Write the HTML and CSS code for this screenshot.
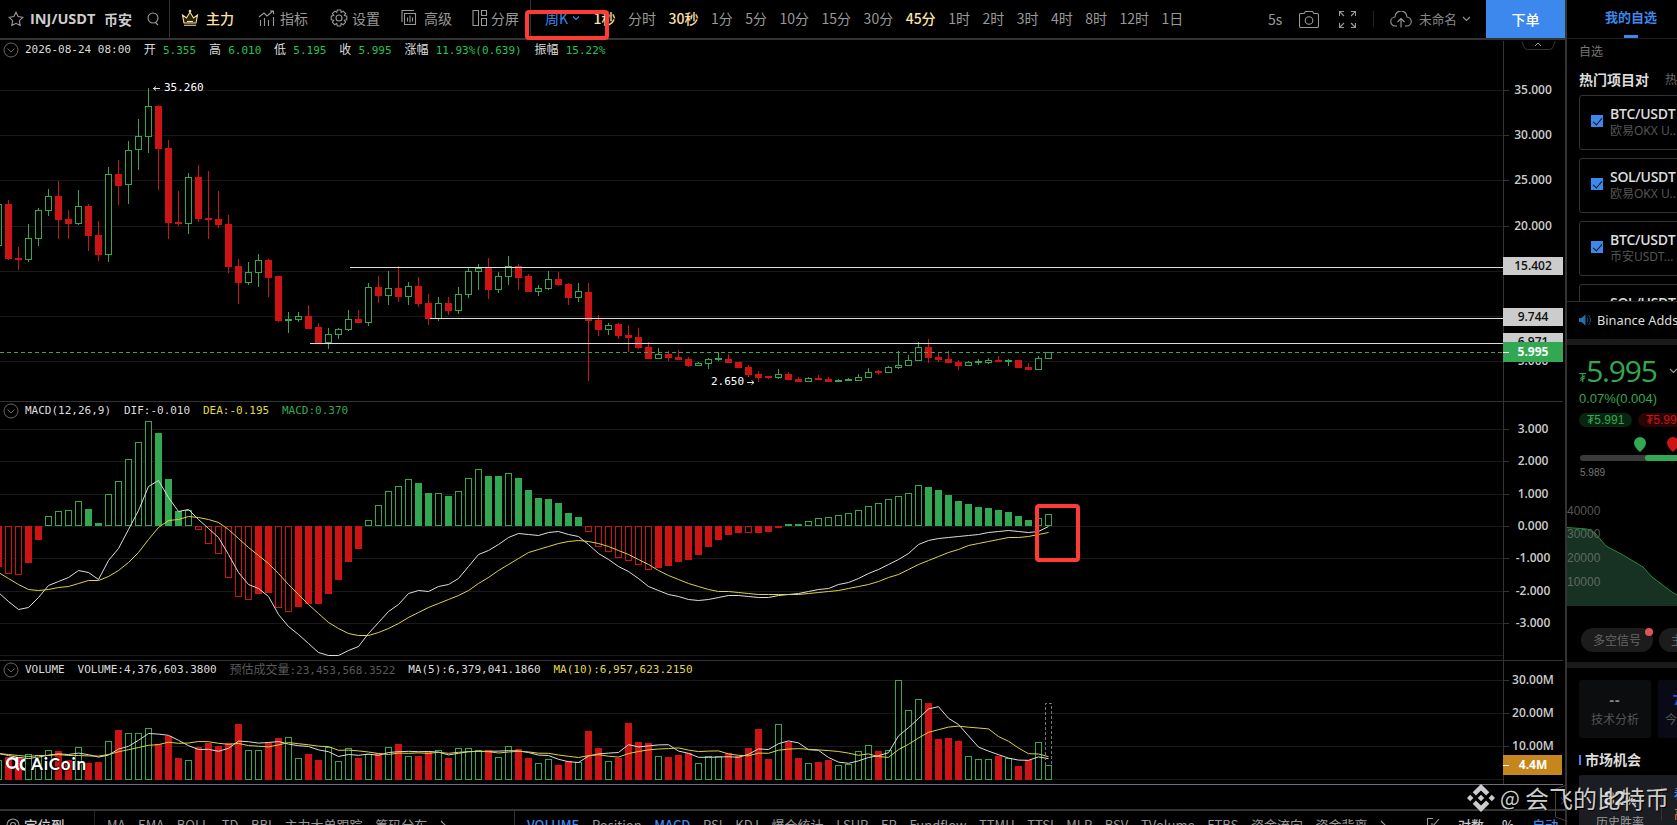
FILE: index.html
```html
<!DOCTYPE html>
<html lang="zh-CN">
<head>
  <meta charset="UTF-8" />
  <meta name="viewport" content="width=device-width, initial-scale=1.0"/>
  <title>INJ/USDT 币安 - AiCoin</title>
  <link rel="stylesheet" href="styles.css">
</head>
<body>
  <div class="app">
    <div class="workspace">
      <header class="topbar">
        <div class="pair">
          <svg class="icon star" width="16" height="16" viewBox="0 0 16 16"><path d="M8 1.2l2.1 4.4 4.7.7-3.4 3.4.8 4.9L8 12.3l-4.2 2.3.8-4.9L1.2 6.3l4.7-.7z"/></svg>
          <span class="pair-name">INJ/USDT</span>
          <span class="pair-market">币安</span>
          <svg class="icon search" width="13" height="14" viewBox="0 0 13 14"><circle cx="6" cy="6" r="5"/><path d="M8.5 10.5l2.5 2.5"/></svg>
        </div>
        <nav class="tools">
          <span class="tool gold"><svg class="icon" width="18" height="18" viewBox="0 0 18 18"><path d="M3 14L1.5 6l4 3L9 3l3.500 6 4-3L15 14zM3 16.200h12"/><path d="M6 12.500h6"/><circle cx="9" cy="2" r=".8"/></svg>主力</span>
          <span class="tool t-ind"><svg class="icon" width="18" height="18" viewBox="0 0 18 18"><path d="M1 8l5-4 3 3 6-5M12 2h3.500v3M2.500 11v6M6.500 9v8M10.500 11v6M15.500 8v9"/></svg>指标</span>
          <span class="tool t-set"><svg class="icon" width="18" height="18" viewBox="0 0 18 18"><path d="M7.300 1h3.400l.5 2.300 2-1.200 2.400 2.400-1.300 2 2.500.6v3.600l-2.500.6 1.300 2-2.400 2.400-2-1.300-.5 2.600H7.300l-.5-2.600-2 1.300-2.400-2.400 1.300-2-2.500-.6V7.100l2.500-.6-1.300-2 2.400-2.400 2 1.200z"/><circle cx="9" cy="9" r="3"/></svg>设置</span>
          <span class="tool t-adv"><svg class="icon" width="16" height="18" viewBox="0 0 16 18"><path d="M1 13V1.500h12M3.500 4.500h11v11h-11zM6.500 8.500v4M9 6.500v7M11.500 8.500v4"/></svg>高级</span>
          <span class="tool t-split"><svg class="icon" width="16" height="18" viewBox="0 0 16 18"><path d="M1 1.500h5.500v15H1zM9.500 1.500h5v5h-5zM9.500 9.500h5v7h-5z"/></svg>分屏</span>
        </nav>
        <nav class="periods">
          <span class="active">周K<svg class="icon caret" width="8" height="6" viewBox="0 0 8 6"><path d="M1 1.500l3 3 3-3"/></svg></span>
          <span class="gold">1秒</span><span>分时</span><span class="gold">30秒</span><span>1分</span><span>5分</span><span>10分</span><span>15分</span><span>30分</span><span class="gold">45分</span><span>1时</span><span>2时</span><span>3时</span><span>4时</span><span>8时</span><span>12时</span><span>1日</span>
        </nav>
        <div class="actions">
          <span class="refresh">5s</span>
          <svg class="icon camera" width="20" height="17" viewBox="0 0 20 17"><path d="M2 2.500h3l1.500-2h7l1.500 2h3q1.500 0 1.500 1.500v11q0 1.500-1.500 1.500H2Q.5 16.500.5 15V4Q.5 2.500 2 2.500z"/><circle cx="10" cy="9.500" r="3.800"/></svg>
          <svg class="icon expand" width="17" height="17" viewBox="0 0 17 17"><path d="M.5 5V.5H5M12 .5h4.500V5M16.500 12v4.500H12M5 16.500H.5V12M1 1l4 4M16 1l-4 4M16 16l-4-4M1 16l4-4"/></svg>
          <i class="sep"></i>
          <svg class="icon cloud" width="22" height="17" viewBox="0 0 22 17"><path d="M7 15H5.500A4.500 4.500 0 0 1 5 6a6 6 0 0 1 12 0 4.500 4.500 0 0 1-.5 9H15M11 16.500V8M7.500 11L11 7.500l3.500 3.500"/></svg>
          <span class="layout">未命名</span>
          <svg class="icon" width="9" height="6" viewBox="0 0 9 6"><path d="M1 1l3.500 3.500L8 1"/></svg>
        </div>
        <button class="order">下单</button>
      </header>

      <section class="chart">
        <svg id="plot" width="1565" height="768" viewBox="0 41 1565 768"></svg>
        <div class="legend legend-price">
          <svg class="fold" width="16" height="16" viewBox="0 0 16 16"><circle cx="8" cy="8" r="7"/><path d="M4.500 6.500L8 10l3.500-3.500"/></svg>
          <span class="date">2026-08-24 08:00</span>
          <span>开 <b>5.355</b></span><span>高 <b>6.010</b></span><span>低 <b>5.195</b></span><span>收 <b>5.995</b></span><span>涨幅 <b>11.93%(0.639)</b></span><span>振幅 <b>15.22%</b></span>
        </div>
        <div class="legend legend-macd">
          <svg class="fold" width="16" height="16" viewBox="0 0 16 16"><circle cx="8" cy="8" r="7"/><path d="M4.500 6.500L8 10l3.500-3.500"/></svg>
          <span>MACD(12,26,9)</span><span>DIF:-0.010</span><span class="yellow">DEA:-0.195</span><span class="green">MACD:0.370</span>
        </div>
        <div class="legend legend-vol">
          <svg class="fold" width="16" height="16" viewBox="0 0 16 16"><circle cx="8" cy="8" r="7"/><path d="M4.500 6.500L8 10l3.500-3.500"/></svg>
          <span>VOLUME</span><span>VOLUME:4,376,603.3800</span><span class="dim"><i>预估成交量</i>:23,453,568.3522</span><span>MA(5):6,379,041.1860</span><span class="yellow">MA(10):6,957,623.2150</span>
        </div>
        <div class="brand">
          <svg width="21" height="18" viewBox="0 0 21 18"><circle cx="7" cy="8" r="4.800"/><path d="M12 2v10q0 2 2 3M20 5q-4 0-4 4.500t4 5"/></svg>AiCoin
        </div>
      </section>

      <footer class="bottombar">
        <svg class="icon locate" width="14" height="14" viewBox="0 0 14 14"><circle cx="7" cy="7" r="6"/><circle cx="7" cy="7" r="2.500"/></svg>
        <b class="goto">定位到</b>
        <div class="mains"><span>MA</span><span>EMA</span><span>BOLL</span><span>TD</span><span>BBI</span><span>主力大单跟踪</span><span>筹码分布</span><svg class="icon" width="6" height="10" viewBox="0 0 6 10"><path d="M1 1l4 4-4 4"/></svg></div>
        <div class="subs"><span class="on">VOLUME</span><span>Position</span><span class="on">MACD</span><span>RSI</span><span>KDJ</span><span>爆仓统计</span><span>LSUR</span><span>ER</span><span>Fundflow</span><span>TTMU</span><span>TTSI</span><span>MLR</span><span>BSV</span><span>TVolume</span><span>FTBS</span><span>资金流向</span><span>资金背离</span><svg class="icon" width="6" height="10" viewBox="0 0 6 10"><path d="M1 1l4 4-4 4"/></svg></div>
        <div class="scale"><svg class="icon" width="13" height="13" viewBox="0 0 13 13"><path d="M6 .5H.5v12M12 1L5 9M5 5v4h4"/></svg><b>对数</b><b>%</b><b class="on">自动</b></div>
      </footer>
    </div>

    <aside class="side">
      <div class="tabs"><span>我的自选</span></div>
      <div class="sub-tab">自选</div>
      <div class="groups"><b>热门项目对</b><span>热门</span></div>
      <div class="watch">
        <div class="coin"><i class="check"></i><div><b>BTC/USDT</b><small>欧易OKX U...</small></div></div>
        <div class="coin"><i class="check"></i><div><b>SOL/USDT</b><small>欧易OKX U...</small></div></div>
        <div class="coin"><i class="check"></i><div><b>BTC/USDT</b><small>币安USDT...</small></div></div>
        <div class="coin"><i class="check"></i><div><b>SOL/USDT</b><small>币安USDT...</small></div></div>
      </div>
      <div class="news">
        <svg width="13" height="12" viewBox="0 0 13 12"><path class="horn" d="M0 4h2.500L6.500.5v11L2.500 8H0z"/><path class="wave" d="M8 3.500q2 2.500 0 5M9.500 1q4 5 0 10"/></svg>
        <span>Binance Adds</span>
      </div>
      <div class="band"></div>
      <div class="quote">
        <div class="last"><small>₮</small>5.995<svg class="icon" width="9" height="6" viewBox="0 0 9 6"><path d="M1 1l3.500 3.500L8 1"/></svg></div>
        <div class="change">0.07%(0.004)</div>
        <div class="book"><span class="bid">₮5.991</span><span class="ask">₮5.999</span></div>
        <svg class="range" width="98" height="24" viewBox="0 0 98 24">
          <path fill="#32a852" d="M61 15q-6-5-6-9a6 6 0 0 1 12 0q0 4-6 9z"/>
          <path fill="#cc1414" d="M94 15q-6-5-6-9a6 6 0 0 1 12 0q0 4-6 9z"/>
          <rect x="1" y="18" width="97" height="6" rx="3" fill="#3a3a3a"/>
          <rect x="66" y="18" width="40" height="6" rx="3" fill="#32a852"/>
        </svg>
        <div class="low">5.989</div>
      </div>
      <svg class="depth" width="110" height="112" viewBox="0 0 110 112">
        <path fill="#173222" d="M0 33.500L20 35l8 4 11 13 17 9 20 12 9 10 20 15 5 3v11H0z"/>
        <path fill="none" stroke="#218a3c" d="M0 33.500L20 35l8 4 11 13 17 9 20 12 9 10 20 15 5 3"/>
        <text x="0" y="21">40000</text><text x="0" y="44">30000</text><text x="0" y="68">20000</text><text x="0" y="92">10000</text>
      </svg>
      <div class="signals"><span class="signal dot">多空信号</span><span class="signal">主力</span></div>
      <div class="band"></div>
      <div class="stats">
        <div class="stat"><b>--</b><span>技术分析</span></div>
        <div class="stat blue"><b>7</b><span>今日</span></div>
      </div>
      <h3 class="chance">市场机会</h3>
      <div class="win"><div><b>82<small>%</small></b><span>历史胜率</span></div><div class="more"><b>看</b><em>高</em></div></div>
    </aside>
  </div>

  <svg class="edge-tab" width="11" height="36" viewBox="0 0 11 36"><path d="M10.500.5L.5 4v28l10 3.500M6 12.500l3 3.500-3 3.500"/></svg>
  <div class="mark mark-period"></div>
  <div class="mark mark-cross"></div>
  <div class="watermark">
    <svg width="28" height="28" viewBox="0 0 28 28"><path d="M14 0l8.300 8.300-3.200 3.200L14 6.400l-5.100 5.100-3.200-3.200zM3.200 10.800L6.400 14l-3.200 3.200L0 14zM24.800 10.800L28 14l-3.200 3.200-3.200-3.200zM14 10.800l3.200 3.200-3.200 3.200-3.200-3.200zM8.900 16.500L14 21.600l5.100-5.100 3.200 3.200L14 28l-8.300-8.300z"/></svg>
    <span class="at">@</span>
    <span>会飞的比特币</span>
  </div>

  <script src="chart.js"></script>
</body>
</html>
```
FILE: styles.css
```css
* {
  box-sizing: border-box;
}
body {
  margin: 0;
  background: #000;
  color: #999;
  font-family: "Noto Sans", "Noto Sans CJK SC", sans-serif;
  font-size: 14px;
  width: 1677px;
  height: 825px;
  overflow: hidden;
  position: relative;
}
.app {
  display: flex;
  height: 825px;
  overflow: hidden;
}
.workspace {
  width: 1567px;
  flex: none;
  border-right: 2px solid #333;
  display: flex;
  flex-direction: column;
}
.icon {
  fill: none;
  stroke: #999;
  stroke-width: 1.1;
  flex: none;
}
.gold {
  color: #fbe0a5;
}
.gold .icon {
  stroke: #fbe0a5;
  fill: #2b2408;
}
.green {
  color: #32a852;
}
.yellow {
  color: #e0d848;
}
.legend .dim {
  color: #5a5a5a;
}

/* top bar */
.topbar {
  height: 40px;
  flex: none;
  border-bottom: 2px solid #333;
  display: flex;
  white-space: nowrap;
  font-family: "Noto Sans CJK SC", sans-serif;
}
.pair {
  width: 170px;
  flex: none;
  border-right: 1px solid #333;
  display: flex;
  align-items: center;
  padding-left: 8px;
  padding-bottom: 1px;
  color: #ccc;
  font-weight: bold;
}
.pair-name {
  margin-left: 6px;
  width: 74px;
  font-family: "Open Sans", sans-serif;
  font-size: 14.5px;
}
.pair-market {
  width: 43px;
}
.tools {
  width: 361px;
  flex: none;
  display: flex;
  align-items: center;
  padding-left: 11px;
  padding-bottom: 2px;
  border-right: 1px solid #333;
}
.tool {
  display: flex;
  align-items: center;
  width: 77px;
  flex: none;
}
.tool .icon {
  margin-right: 7px;
}
.tool.gold {
  font-weight: 500;
}
.tool.t-ind {
  width: 72px;
}
.t-ind .icon, .t-set .icon {
  margin-right: 4px;
}
.tool.t-set {
  width: 71px;
}
.tool.t-adv {
  width: 71px;
}
.tool.t-split {
  width: 50px;
}
.t-split .icon {
  margin-right: 3px;
}
.periods {
  display: flex;
  align-items: center;
  padding-left: 14px;
  padding-bottom: 2px;
  width: 737px;
  flex: none;
  gap: 12.5px;
}
.periods .gold {
  font-weight: 500;
}
.periods .active {
  color: #3d88ed;
  display: flex;
  align-items: center;
  width: 36px;
}
.caret {
  stroke: #3d88ed;
  margin-left: 4px;
}
.actions {
  display: flex;
  align-items: center;
  width: 218px;
  flex: none;
}
.refresh {
  width: 31px;
}
.expand {
  margin-left: 20px;
}
.sep {
  width: 1px;
  height: 16px;
  background: #222;
  margin: 0 16px 0 17px;
}
.layout {
  font-size: 12.7px;
  margin: 0 5px 2px 7px;
  color: #888;
}
.order {
  width: 80px;
  height: 38px;
  border: none;
  padding: 0;
  background: #3d88ed;
  color: #fff;
  font: 500 14px "Noto Sans CJK SC", sans-serif;
}

/* chart panes */
.chart {
  height: 769px;
  flex: none;
  position: relative;
}
#plot {
  display: block;
  margin-top: 1px;
}
.legend {
  position: absolute;
  left: 3px;
  display: flex;
  align-items: center;
  height: 16px;
  gap: 12.8px;
  font: 11px/16px "DejaVu Sans Mono", "Noto Sans CJK SC", monospace;
  color: #ddd;
  white-space: pre;
}
.legend-price {
  top: 2px;
}
.legend-macd {
  top: 363px;
}
.legend-vol {
  top: 622px;
}
.legend b {
  font-weight: normal;
  font-size: 11px;
  color: #20c458;
}
.legend i {
  font-style: normal;
  font-size: 12px;
}
.legend-price span:not(.date) {
  font-size: 12px;
}
.fold {
  fill: none;
  stroke: #666;
  margin-right: -6.8px;
}
.brand {
  position: absolute;
  left: 5px;
  top: 713px;
  display: flex;
  align-items: center;
  gap: 5px;
  color: #fff;
  font: bold 17px/22px Lato, sans-serif;
  letter-spacing: 0.9px;
  text-shadow: 0 0 2px #000, 0 0 2px #000;
}
.brand svg {
  fill: none;
  stroke: #fff;
  stroke-width: 2.6;
}
#plot text {
  font: 600 12px "Open Sans", sans-serif;
  fill: #ccc;
  text-anchor: middle;
}
#plot .note {
  font: 11px "DejaVu Sans Mono", monospace;
  fill: #fff;
  text-anchor: start;
}
#plot .on-light {
  fill: #111;
}
#plot .on-color {
  fill: #fff;
  font-weight: bold;
}

/* bottom bar */
.bottombar {
  height: 30px;
  flex: none;
  border-top: 2px solid #333;
  display: flex;
  align-items: center;
  white-space: nowrap;
  font-size: 13px;
  line-height: 20px;
  padding-bottom: 1px;
  font-family: "Noto Sans CJK SC", sans-serif;
}
.bottombar b {
  color: #ccc;
  font-weight: 500;
}
.bottombar .on {
  color: #3d88ed;
  font-weight: 500;
}
.locate {
  margin-left: 6px;
}
.goto {
  margin-left: 4px;
  width: 70px;
  font-size: 13.5px;
}
.mains {
  display: flex;
  align-items: center;
  gap: 12.6px;
  width: 421px;
  height: 28px;
  padding-left: 12px;
  border-left: 1px solid #222;
  border-right: 1px solid #333;
}
.subs {
  display: flex;
  align-items: center;
  gap: 12.6px;
  width: 912px;
  padding-left: 12px;
}
.scale {
  display: flex;
  align-items: center;
  gap: 18px;
}

/* right panel */
.side {
  width: 110px;
  flex: none;
  overflow: hidden;
  white-space: nowrap;
}
.tabs {
  height: 39px;
  border-bottom: 1px solid #1c1c1c;
  padding-left: 38px;
}
.tabs span {
  display: block;
  width: 52px;
  height: 38px;
  line-height: 34px;
  font-weight: bold;
  font-size: 13px;
  color: #3d88ed;
  background: linear-gradient(#3d88ed, #3d88ed) 19px 35px / 14px 3px no-repeat;
}
.sub-tab {
  margin: 4px 0 0 12px;
  font-size: 12px;
  line-height: 18px;
  color: #777;
}
.groups {
  margin-left: 12px;
  padding-top: 8px;
  height: 34px;
  line-height: 22px;
  display: flex;
  gap: 16px;
}
.groups b {
  color: #ddd;
}
.groups span {
  font-size: 12px;
  color: #666;
}
.watch {
  height: 206px;
  overflow: hidden;
  padding-left: 12px;
}
.coin {
  width: 160px;
  height: 55px;
  margin-bottom: 8px;
  border: 1px solid #333;
  border-radius: 3px;
  display: flex;
  padding: 8px 0 0 10px;
}
.coin b {
  display: block;
  font: 600 14px/20px "Open Sans", sans-serif;
  letter-spacing: -0.3px;
  color: #ddd;
}
.coin small {
  display: block;
  font-size: 12px;
  line-height: 14px;
  color: #555;
}
.check {
  width: 12px;
  height: 12px;
  background: #3d88ed;
  margin: 11px 7px 0 1px;
  flex: none;
}
.check::after {
  content: "";
  display: block;
  width: 4px;
  height: 8px;
  margin: 1px 0 0 4px;
  border: solid #06152b;
  border-width: 0 1.5px 1.5px 0;
  transform: rotate(40deg);
}
.news {
  height: 38px;
  border-top: 1px solid #2a2a2a;
  padding-left: 12px;
  padding-bottom: 1px;
  display: flex;
  align-items: center;
  gap: 5px;
  font-size: 12.8px;
  color: #ddd;
}
.news svg {
  flex: none;
}
.horn {
  fill: #2271ad;
}
.wave {
  fill: none;
  stroke: #1b4d7a;
}
.band {
  height: 6px;
  background: #1a1a1c;
}
.quote {
  height: 149px;
  padding-left: 12px;
  color: #32a852;
}
.last {
  padding-top: 8px;
  height: 43px;
  font: 30px/36px "Open Sans", sans-serif;
  letter-spacing: -1.2px;
}
.last small {
  font-size: 12px;
  margin-right: 1px;
}
.last .icon {
  vertical-align: 8px;
  margin-left: 12px;
}
.change {
  font: 13px/22px "Liberation Sans", sans-serif;
}
.book {
  display: flex;
  gap: 6px;
  margin-top: 3px;
  font: 12px/14px "Liberation Sans", sans-serif;
}
.book span {
  width: 53px;
  height: 14px;
  padding-left: 8px;
  border-radius: 7px;
  flex: none;
}
.bid {
  background: #08260f;
}
.ask {
  background: #2a0505;
  color: #cc1414;
}
.range {
  display: block;
  margin-top: 10px;
}
.low {
  margin: 4px 0 0 1px;
  font: 10px/16px "Liberation Sans", sans-serif;
  color: #777;
}
.depth {
  display: block;
}
.depth text {
  font: 12px "Liberation Sans", sans-serif;
  fill: #888;
  fill-opacity: 0.65;
}
.signals {
  height: 56px;
  padding: 22px 0 0 14px;
  display: flex;
  gap: 6px;
}
.signal {
  width: 72px;
  height: 24px;
  flex: none;
  line-height: 25px;
  font-size: 12px;
  padding-left: 12px;
  border-radius: 12px;
  background: #1c1c1c;
  color: #666;
  position: relative;
}
.dot::after {
  content: "";
  position: absolute;
  right: 0;
  top: 0;
  width: 8px;
  height: 8px;
  border-radius: 50%;
  background: #e0535a;
}
.stats {
  display: flex;
  gap: 7px;
  padding: 12px 0 0 12px;
}
.stat {
  width: 72px;
  height: 58px;
  flex: none;
  background: #0c0d0f;
  border-radius: 3px;
  text-align: center;
  padding-top: 10px;
  color: #555;
}
.stat b, .stat span {
  display: block;
  line-height: 20px;
}
.stat b {
  color: #888;
  letter-spacing: 1px;
}
.stat span {
  font-size: 12px;
}
.stat.blue {
  background: #0a0a16;
  text-align: left;
  padding-left: 7px;
}
.stat.blue b {
  padding-left: 8px;
  color: #2557d6;
}
.chance {
  margin: 12px 0 0 12px;
  font-size: 14px;
  line-height: 20px;
  color: #ddd;
  padding-left: 6px;
  background: linear-gradient(#3d88ed, #3d88ed) 0 5px / 2px 10px no-repeat;
}
.win {
  margin: 5px 0 0 12px;
  width: 180px;
  height: 60px;
  background: #1c1d22;
  border-radius: 3px;
  display: flex;
  padding-top: 11px;
}
.win div {
  width: 82px;
  text-align: center;
}
.win b, .win span {
  display: block;
}
.win b {
  font-size: 19px;
  line-height: 24px;
  color: #ddd;
}
.win small {
  font-size: 12px;
}
.win span {
  font-size: 12px;
  line-height: 20px;
}
.win .more {
  border-left: 1px solid #333;
  text-align: left;
  padding-left: 12px;
  height: 34px;
}
.win .more b {
  font-size: 12px;
  line-height: 18px;
  color: #3d88ed;
}
.more em {
  font-size: 12px;
  font-style: normal;
  color: #f08030;
}

/* overlays */
.edge-tab {
  position: absolute;
  left: 1555px;
  top: 785px;
  fill: none;
  stroke: #444;
}
.mark {
  position: absolute;
  border: 4px solid #ff3b36;
  border-radius: 4px;
}
.mark-period {
  left: 525px;
  top: 10px;
  width: 84px;
  height: 30px;
}
.mark-cross {
  left: 1035px;
  top: 504px;
  width: 45px;
  height: 58px;
}
.watermark {
  position: absolute;
  left: 1467px;
  top: 780px;
  height: 36px;
  display: flex;
  align-items: center;
  font: 24px/36px "Noto Sans CJK SC", sans-serif;
  color: #ccc;
  text-shadow: 1px 1px 1px #000;
  white-space: nowrap;
}
.watermark svg {
  fill: #ccc;
}
.at {
  width: 25px;
  margin: -2px 0 0 5px;
  font-size: 21px;
}
```
FILE: chart.js
```js
const GREEN = "#32a852", RED = "#cc1414", GRID = "#191919", LINE = "#333";
const plot = document.getElementById("plot");
let out = "";

// side, high, body top, body bottom, low
const candles = `g204,204,246,246 r200,204,259,260 r247,258,260,270 g224,238,260,262 g208,210,239,246
g189,196,211,216 r181,196,220,239 r210,219,224,239 g190,206,224,225 r204,206,236,251
r221,235,255,261 g167,174,255,262 r160,174,186,205 g141,150,185,204 g119,136,150,170
g88,106,137,153 r105,106,149,190 r140,148,223,239 r191,222,224,226 g173,177,224,234
r165,177,219,222 r171,218,220,239 r191,219,225,228 r215,224,267,273 r259,266,283,304
g262,272,283,285 g254,260,273,287 r259,260,278,297 r276,276,321,322 g312,319,321,333
g312,316,320,322 r305,316,329,329 r323,327,343,344 g328,334,343,349 g328,329,335,339
g310,319,330,331 r310,319,323,323 g283,287,323,326 r276,287,296,303 g271,288,296,305
r266,288,297,302 g282,286,297,305 r277,286,304,307 r294,303,319,325 g297,303,319,321
r297,303,311,315 g287,294,311,314 g268,271,295,298 g264,268,272,290 r258,268,290,299
g272,276,290,293 g256,266,277,285 r264,266,278,290 r274,276,292,292 g285,288,292,296
g271,279,289,290 r272,279,285,286 r283,284,298,305 g283,291,298,302 r283,292,321,381
r315,320,330,336 g323,325,330,335 r323,324,336,339 r325,335,338,352 r328,337,348,349
r342,347,359,359 g348,354,359,359 r351,354,358,361 r350,357,360,360 r357,359,366,367
g362,363,366,366 g358,359,364,369 g352,358,360,361 r354,359,363,363 r362,362,368,368
r365,367,375,377 r371,374,378,382 r376,376,378,379 g369,374,378,379 r372,374,380,380
r377,379,382,382 g377,378,382,382 r375,378,380,380 r377,379,382,382 g379,380,382,382
g378,379,381,381 g374,377,381,381 g368,372,378,378 r370,371,373,375 g366,367,373,373
g351,365,368,369 g355,360,366,366 g342,347,361,361 r339,347,358,363 r352,357,360,362
r351,359,363,363 r360,362,366,370 g361,362,366,366 g359,361,363,365 g358,360,363,364
r356,360,362,362 g359,360,362,366 r360,360,368,368 r363,367,370,370 g356,358,370,370
g352,352,359,359`.split(/\s+/).map(s => [s[0], ...s.slice(1).split(",").map(Number)]);

const hist = [567,574,575,563,540,516,511,510,501,509,523,494,481,459,442,421,433,479,511,510,
  530,544,554,578,597,600,594,593,608,612,607,604,604,594,580,562,549,520,505,491,
  486,479,483,493,492.6,496,491,478,469,476,476,473,478,490,498,499,503,513,517,532,
  547,552,558,561,565,570,568,566,562,560,555,547,540,535,533,533.4,533,532,528,524,
  524,521,518,517,515,513,510,506,503,499,496,493,485,487,490,495,501,504,507,508,
  510,512,516,520,518,514];

const dif = [592,601,609,607,597,585,581,577,570,572,579,560,548,529,510,486,480,497,511,509,
  519,528,537,554,572,584,588,596,614,626,634,643,652,655,655,650,646,633,622,611,
  604,593,590,591,586,584,578,566,554,550,544,537,533,534,535,532,531,534,536,544,
  553,559,566,571,578,586,590,594,596,599,600,599,597,595,595,596,597,597,595,594,
  593,591,589,588,584,582,578,573,569,564,559,553,544,540,538,537,536,535,534,532,
  531,530,531,532,531,526];

const dea = [572,578,584,589,590,589,587,586,583,580,580,576,570,562,552,539,527,520,519,516,
  517,519,522,529,538,547,555,563,573,584,594,604,613,622,628,633,635,635,632,628,
  623,617,612,607,603,599,595,590,583,577,570,564,558,552,549,546,543,541,540,541,
  543,546,550,554,559,564,570,575,579,583,586,589,591,591,592,593,594,594,594,594,
  594,593,592,591,590,588,586,584,581,577,574,569,564,560,556,552,549,545,543,541,
  539,537,537,536,534,532];

const volume = [760,757,757,754,755,750,751,760,747,763,762,741,730,733,733,728,744,736,758,760,
  747,743,746,743,724,750,750,743,738,737,758,754,760,747,761,748,758,754,753,747,
  744,756,756,752,750,758,748,748,750,750,757,746,749,758,763,759,765,761,762,731,
  748,761,758,723,742,743,756,757,755,753,763,756,756,753,756,748,729,759,724,742,
  758,763,762,760,765,764,751,745,751,750,680,710,699,703,739,738,741,756,759,759,
  756,758,766,760,742,765];

const rect = (x, y, w, h, fill, extra = "") =>
  out += `<rect x="${x}" y="${y}" width="${w}" height="${h}" fill="${fill}" ${extra}/>`;

function bar(i, top, bottom, color, hollow) {
  const x = 10 * i - 5, h = Math.max(2, Math.round(bottom) - Math.round(top));
  if (hollow && h > 2) {
    rect(x + 0.5, Math.round(top) + 0.5, 6, h - 1, "#000", `stroke="${color}"`);
  } else {
    rect(x, Math.round(top), 7, h, color);
  }
}

function curve(ys, color) {
  const pts = ys.map((y, i) => `${10 * i - 1.5},${y + 0.5}`).join(" ");
  out += `<polyline points="${pts}" fill="none" stroke="${color}"/>`;
}

// moving average over the volume bars, lead = values before there is enough history
function average(n, lead) {
  return volume.map((v, i) => i < lead.length ? lead[i]
    : volume.slice(i - n + 1, i + 1).reduce((a, b) => a + b) / n);
}

function label(y, text, cls = "") {
  out += `<text x="1533" y="${y + 4}" class="${cls}">${text}</text>`;
}

// grid and axis
const price = { 90: "35.000", 135: "30.000", 180: "25.000", 226: "20.000", 271: "", 316: "", 361: "5.000" };
const macd = { 429: "3.000", 461: "2.000", 494: "1.000", 526: "0.000", 558: "-1.000", 591: "-2.000", 623: "-3.000", 655: "" };
const vol = { 680: "30.00M", 713: "20.00M", 746: "10.00M", 779: "" };
for (const axis of [price, macd, vol]) {
  for (const y in axis) {
    rect(0, y, 1503, 1, GRID);
    if (axis[y]) {
      rect(1504, y, 5, 1, LINE);
      label(+y, axis[y]);
    }
  }
}
rect(1503, 41, 1, 743, LINE);
rect(0, 401, 1563, 1, LINE);
rect(0, 660, 1563, 1, LINE);
rect(0, 784, 1563, 1, "#6e6c7c");
out += `<path d="M1521.500 40q1 3 2 6 1 3.500 4 3.500h22q3 0 4-3.500 1-3 2-6" fill="none" stroke="#333"/>
<path d="M1535 46l3-3 3 3" fill="none" stroke="#999"/>`;

candles.forEach(([side, high, top, bottom, low], i) => {
  const color = side === "g" ? GREEN : RED;
  rect(10 * i - 2, high, 1, Math.max(1, low - high), color);
  bar(i, top, bottom, color, side === "g");
  bar(i, volume[i], 780, color, side === "g");
});

hist.forEach((y, i) => {
  const v = 526 - y, prev = i ? 526 - hist[i - 1] : v;
  const hollow = Math.abs(v) > Math.abs(prev) || v * prev < 0;
  v > 0 ? bar(i, y, 526, GREEN, hollow) : bar(i, 526, y, RED, hollow);
});

curve(dif, "#ddd");
curve(dea, "#dcd440");
curve(average(5, [753, 755, 757, 758]), "#ddd");
curve(average(10, [753, 754, 755, 756, 755, 755, 754, 755, 755]), "#dcd440");
out += `<path d="M1045.500 765V703.500h6V765" fill="none" stroke="#777" stroke-dasharray="3 2"/>`;

// drawn levels and the last price
rect(350, 267, 1153, 1, "#ddd");
rect(430, 318, 1073, 1, "#ddd");
rect(310, 343, 1193, 1, "#ddd");
out += `<path d="M0 352.500H1503" stroke="${GREEN}" stroke-dasharray="4 3"/>`;
[[257, "15.402"], [308, "9.744"], [333, "6.971"]].forEach(([y, text]) => {
  rect(1503, y, 60, 18, "#ccc");
  label(y + 9, text, "on-light");
});
rect(1503, 342, 60, 20, GREEN);
rect(1503, 352, 6, 1, "#fff");
label(352, "5.995", "on-color");
rect(1503, 755, 59, 20, "#c5861e");
rect(1503, 765, 6, 1, "#fff");
label(765, "4.4M", "on-color");
out += `<path d="M153 88.500h7M156 86.500l-2.500 2 2.500 2M747 382.500h7M751.500 380.500l2.500 2-2.500 2" fill="none" stroke="#ddd"/>
<text class="note" x="164" y="91">35.260</text><text class="note" x="711" y="385">2.650</text>`;

plot.innerHTML = out;
```
